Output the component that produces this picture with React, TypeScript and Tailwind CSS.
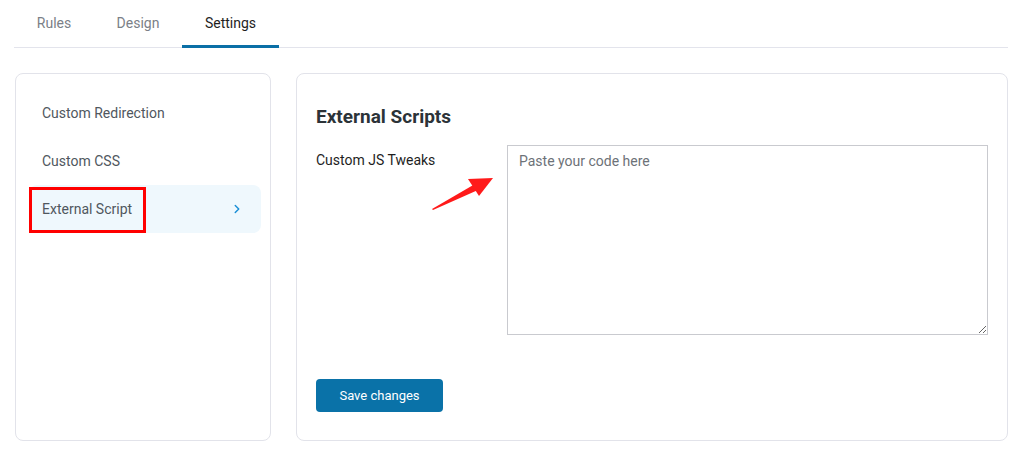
import React from 'react';
import { ChevronRight } from 'lucide-react';

const tabs = [
  { label: 'Rules', w: 'w-[80px]' },
  { label: 'Design', w: 'w-[88px]' },
  { label: 'Settings', w: 'w-[97px]' },
];
const menu = ['Custom Redirection', 'Custom CSS', 'External Script'];

export default function App() {
  return (
    <div className="w-[1024px] h-[458px] bg-white text-[#3c434a]" style={{ fontFamily: 'Roboto, "Liberation Sans", sans-serif' }}>
      {/* tabs */}
      <div className="mx-[14px] w-[994px] flex border-b border-[#e3e4ec] h-[48px]">
        {tabs.map((t) => (
          <div
            key={t.label}
            className={
              t.label === 'Settings'
                ? `${t.w} flex items-center justify-center pt-[1px] text-[14px] text-[#1e1e1e] border-b-[3px] border-[#0a6fa6] -mb-px`
                : `${t.w} flex items-center justify-center pt-[1px] text-[14px] text-[#7b7f87] border-b-[3px] border-transparent -mb-px`
            }
          >
            {t.label}
          </div>
        ))}
      </div>

      <div className="flex gap-[25px] px-[15px] mt-[25px]">
        {/* left menu */}
        <div className="w-[256px] h-[368px] rounded-[8px] border border-[#e2e3ea] pl-[13px] pr-[9px] pt-[15px]">
          {menu.map((m) => {
            const active = m === 'External Script';
            return (
              <div
                key={m}
                className={
                  active
                    ? 'relative h-[48px] flex items-center justify-between pl-[13px] pr-[17px] rounded-[8px] bg-[#eff8fd] text-[14px] text-[#50575e]'
                    : 'h-[48px] flex items-center pl-[13px] text-[14px] text-[#50575e]'
                }
              >
                <span>{m}</span>
                {active && (
                  <>
                    <ChevronRight className="w-[14px] h-[14px] text-[#1b8fd6]" strokeWidth={2.5} />
                    <div className="absolute left-0 top-[2px] w-[117px] h-[46px] border-[3px] border-[#ff0000]" />
                  </>
                )}
              </div>
            );
          })}
        </div>

        {/* right panel */}
        <div className="relative w-[712px] h-[368px] rounded-[8px] border border-[#e2e3ea] px-[19px] pt-[31px]">
          <h2 className="text-[19px] font-bold text-[#2c3338] leading-[24px]">External Scripts</h2>
          <div className="flex mt-[16px]">
            <div className="w-[191px] pt-[5px] text-[14px] text-[#1e1e1e]">Custom JS Tweaks</div>
            <textarea
              placeholder="Paste your code here"
              className="w-[481px] h-[190px] border border-[#c9cacf] px-[11px] py-[5px] text-[14px] text-[#50575e] placeholder:text-[#6d7278] outline-none"
            />
          </div>
          <button className="mt-[44px] w-[127px] h-[33px] rounded-[4px] bg-[#0a72a8] text-white text-[13px]">
            Save changes
          </button>

          {/* annotation arrow */}
          <svg className="absolute left-[134px] top-[101px]" width="64" height="36" viewBox="0 0 64 36">
            <path d="M1 34 L2 35 L47 15 L44 9 Z" fill="#ff1a1a" />
            <path d="M62 3 L37 4 L48 21 Z" fill="#ff1a1a" />
          </svg>
        </div>
      </div>
    </div>
  );
}
